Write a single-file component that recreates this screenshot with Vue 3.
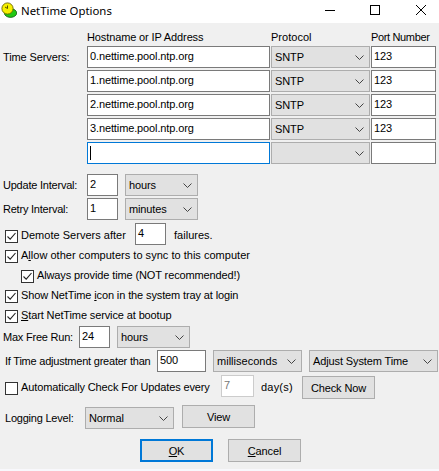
<script setup>
const servers = [
  { host: '0.nettime.pool.ntp.org', protocol: 'SNTP', port: '123' },
  { host: '1.nettime.pool.ntp.org', protocol: 'SNTP', port: '123' },
  { host: '2.nettime.pool.ntp.org', protocol: 'SNTP', port: '123' },
  { host: '3.nettime.pool.ntp.org', protocol: 'SNTP', port: '123' }
]
</script>

<template>
  <div class="window">
    <header class="titlebar">
      <svg class="app-icon" width="16" height="16" viewBox="0 0 16 16">
        <ellipse cx="9.5" cy="11" rx="6.2" ry="4.4" fill="#22c814" stroke="#0a5a0a" stroke-width="0.8" />
        <circle cx="6.5" cy="6.5" r="5.6" fill="#f6f000" stroke="#6a6400" stroke-width="0.9" />
        <path d="M6.5 3.5V6.5L4 5" fill="none" stroke="#555000" stroke-width="1" />
      </svg>
      <span class="title">NetTime Options</span>
      <div class="controls">
        <svg class="ctl" width="10" height="10" viewBox="0 0 10 10"><path d="M0 5.5H10" stroke="#000" /></svg>
        <svg class="ctl" width="10" height="10" viewBox="0 0 10 10"><rect x=".5" y=".5" width="9" height="9" fill="none" stroke="#000" /></svg>
        <svg class="ctl" width="10" height="10" viewBox="0 0 10 10"><path d="M0 0L10 10M10 0L0 10" stroke="#000" stroke-width="1" /></svg>
      </div>
    </header>

    <main class="client">
      <section class="servers">
        <span></span>
        <span class="col-head">Hostname or IP Address</span>
        <span class="col-head loose">Protocol</span>
        <span class="col-head port-head">Port Number</span>
        <template v-for="(s, i) in servers" :key="s.host">
          <span class="servers-label">{{ i === 0 ? 'Time Servers:' : '' }}</span>
          <div class="field">{{ s.host }}</div>
          <div class="select"><span>{{ s.protocol }}</span><svg class="chev" width="9" height="5" viewBox="0 0 9 5"><path d="M.5 .5L4.5 4.5L8.5 .5" fill="none" stroke="#444" /></svg></div>
          <div class="field">{{ s.port }}</div>
        </template>
        <span></span>
        <div class="field focused"><i class="caret"></i></div>
        <div class="select"><span></span><svg class="chev" width="9" height="5" viewBox="0 0 9 5"><path d="M.5 .5L4.5 4.5L8.5 .5" fill="none" stroke="#444" /></svg></div>
        <div class="field"></div>
      </section>

      <div class="row update">
        <span class="label w87 tight">Update Interval:</span>
        <div class="field w31">2</div>
        <div class="select w73 ml7"><span>hours</span><svg class="chev" width="9" height="5" viewBox="0 0 9 5"><path d="M.5 .5L4.5 4.5L8.5 .5" fill="none" stroke="#444" /></svg></div>
      </div>
      <div class="row retry">
        <span class="label w87 tight">Retry Interval:</span>
        <div class="field w31">1</div>
        <div class="select w73 ml7"><span>minutes</span><svg class="chev" width="9" height="5" viewBox="0 0 9 5"><path d="M.5 .5L4.5 4.5L8.5 .5" fill="none" stroke="#444" /></svg></div>
      </div>

      <div class="row demote">
        <span class="box low"><svg width="11" height="11" viewBox="0 0 11 11"><path d="M1.5 5.5L4.2 8.2L9.5 2" fill="none" stroke="#222" stroke-width="1.1" /></svg></span>
        <span class="check-text demote-text loose">Demote Servers after</span>
        <div class="field w31">4</div>
        <span class="failures loose">failures.</span>
      </div>

      <div class="check-row">
        <span class="box"><svg width="11" height="11" viewBox="0 0 11 11"><path d="M1.5 5.5L4.2 8.2L9.5 2" fill="none" stroke="#222" stroke-width="1.1" /></svg></span>
        <span class="check-text loose">A<u>l</u>low other computers to sync to this computer</span>
      </div>
      <div class="check-row nested">
        <span class="box"><svg width="11" height="11" viewBox="0 0 11 11"><path d="M1.5 5.5L4.2 8.2L9.5 2" fill="none" stroke="#222" stroke-width="1.1" /></svg></span>
        <span class="check-text">Always provide time (NOT recommended!)</span>
      </div>
      <div class="check-row">
        <span class="box"><svg width="11" height="11" viewBox="0 0 11 11"><path d="M1.5 5.5L4.2 8.2L9.5 2" fill="none" stroke="#222" stroke-width="1.1" /></svg></span>
        <span class="check-text">Show NetTime <u>i</u>con in the system tray at login</span>
      </div>
      <div class="check-row last">
        <span class="box"><svg width="11" height="11" viewBox="0 0 11 11"><path d="M1.5 5.5L4.2 8.2L9.5 2" fill="none" stroke="#222" stroke-width="1.1" /></svg></span>
        <span class="check-text"><u>S</u>tart NetTime service at bootup</span>
      </div>

      <div class="row">
        <span class="label w79 tight">Max Free Run:</span>
        <div class="field w31">24</div>
        <div class="select w73 ml7"><span>hours</span><svg class="chev" width="9" height="5" viewBox="0 0 9 5"><path d="M.5 .5L4.5 4.5L8.5 .5" fill="none" stroke="#444" /></svg></div>
      </div>
      <div class="row adjust">
        <span class="label w157 pad5 tight">If Time adjustment greater than</span>
        <div class="field w49">500</div>
        <div class="select w89 ml7"><span class="loose">milliseconds</span><svg class="chev" width="9" height="5" viewBox="0 0 9 5"><path d="M.5 .5L4.5 4.5L8.5 .5" fill="none" stroke="#444" /></svg></div>
        <div class="select w129 ml7"><span>Adjust System Time</span><svg class="chev" width="9" height="5" viewBox="0 0 9 5"><path d="M.5 .5L4.5 4.5L8.5 .5" fill="none" stroke="#444" /></svg></div>
      </div>
      <div class="row auto">
        <span class="box low"></span>
        <span class="check-text auto-text">Automatically Check For Updates every</span>
        <div class="field disabled">7</div>
        <span class="days">day(s)</span>
        <button class="btn check-now">Check Now</button>
      </div>
      <div class="row logging">
        <span class="label w85 pad5 tight">Logging Level:</span>
        <div class="select w89 log-select"><span>Normal</span><svg class="chev" width="9" height="5" viewBox="0 0 9 5"><path d="M.5 .5L4.5 4.5L8.5 .5" fill="none" stroke="#444" /></svg></div>
        <button class="btn view">View</button>
      </div>
      <div class="actions">
        <button class="btn primary"><u>O</u>K</button>
        <button class="btn"><u>C</u>ancel</button>
      </div>
    </main>
    <div class="strip"></div>
  </div>
</template>

<style>
html, body { margin: 0; background: #fff; }
</style>

<style scoped>
.window {
  width: 439px;
  height: 471px;
  overflow: hidden;
  display: flex;
  flex-direction: column;
  font-family: "Liberation Sans", Arial, sans-serif;
  font-size: 11px;
  letter-spacing: -0.12px;
  color: #000;
}
.loose { letter-spacing: 0.02px; }
.tight { letter-spacing: -0.22px; }
.titlebar {
  height: 23px;
  flex: none;
  background: #fff;
  display: flex;
  align-items: center;
  padding-left: 1px;
}
.app-icon { flex: none; margin-top: -4px; }
.title {
  margin-left: 4px;
  margin-top: -3px;
  font-family: "Noto Sans", sans-serif;
  font-size: 11.4px;
  letter-spacing: 0;
}
.controls {
  margin-left: auto;
  display: flex;
  gap: 36px;
  padding-right: 13px;
  margin-top: -3px;
}
.ctl { display: block; }
.ctl:first-child { margin-right: -1px; }
.client {
  height: 446px;
  flex: none;
  background: #f0f0f0;
}
.strip { flex: 1; background: #f8f8fc; }
.servers {
  display: grid;
  grid-template-columns: 86px 183px 99px 65px;
  grid-template-rows: 21px repeat(5, 22px);
  column-gap: 1px;
  row-gap: 2px;
}
.col-head { align-self: end; line-height: 14px; white-space: nowrap; }
.port-head { letter-spacing: -0.35px; }
.servers-label { padding-left: 3px; line-height: 22px; white-space: nowrap; }
.field {
  box-sizing: border-box;
  height: 22px;
  background: #fff;
  border: 1px solid #7a7a7a;
  padding: 2px;
  line-height: 14px;
  flex: none;
  position: relative;
}
.field.focused { border-color: #0078d7; }
.caret {
  position: absolute;
  left: 2px;
  top: 3px;
  width: 1px;
  height: 14px;
  background: #000;
}
.field.disabled {
  width: 33px;
  border-color: #ccc;
  color: #777;
}
.select {
  box-sizing: border-box;
  height: 22px;
  background: #e1e1e1;
  border: 1px solid #adadad;
  display: flex;
  align-items: center;
  justify-content: space-between;
  padding: 0 5px 0 3px;
  line-height: 14px;
  flex: none;
}
.chev { flex: none; margin-top: 1px; }
.row {
  display: flex;
  height: 22px;
  align-items: flex-start;
}
.update { margin-top: 10px; }
.retry, .adjust { margin-top: 2px; }
.demote { margin-top: 3px; }
.label { flex: none; line-height: 22px; box-sizing: border-box; padding-left: 3px; white-space: nowrap; }
.w87 { width: 87px; }
.w79 { width: 79px; }
.w157 { width: 157px; }
.w85 { width: 85px; }
.pad5 { padding-left: 5px; }
.w31 { width: 31px; }
.w49 { width: 49px; }
.w73 { width: 73px; }
.w89 { width: 89px; }
.w129 { width: 129px; }
.ml7 { margin-left: 7px; }
.box {
  box-sizing: border-box;
  flex: none;
  width: 13px;
  height: 13px;
  background: #fff;
  border: 1px solid #333;
  margin: 3px 3px 0 5px;
  display: flex;
}
.box.low { margin-top: 7px; }
.check-text { line-height: 16px; white-space: nowrap; }
.demote-text { width: 114px; margin-top: 4px; flex: none; }
.failures { margin: 4px 0 0 8px; line-height: 16px; }
.check-row {
  display: flex;
  height: 20px;
  align-items: flex-start;
}
.demote + .check-row { margin-top: 2px; }
.check-row.nested { padding-left: 16px; }
.check-row.last { height: 19px; }
.auto { margin-top: 3px; height: 24px; }
.auto-text { width: 200px; margin-top: 4px; flex: none; }
.days { width: 32px; flex: none; margin: 4px 0 0 7px; line-height: 16px; letter-spacing: 0.2px; white-space: nowrap; }
.btn {
  box-sizing: border-box;
  width: 73px;
  height: 23px;
  background: #e1e1e1;
  border: 1px solid #adadad;
  padding: 0;
  font: inherit;
  letter-spacing: inherit;
  color: #000;
  flex: none;
}
.check-now { margin: 1px 0 0 9px; }
.logging { margin-top: 6px; height: 24px; }
.logging .label { line-height: 26px; }
.log-select { margin-top: 2px; }
.view { margin-left: 8px; }
.actions {
  display: flex;
  gap: 15px;
  margin: 10px 0 0 140px;
}
.primary { border: 2px solid #0078d7; }
</style>
